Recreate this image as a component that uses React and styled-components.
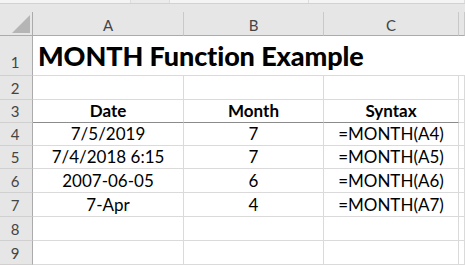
import React from "react";
import styled, { createGlobalStyle } from "styled-components";

const Global = createGlobalStyle`
  html, body { margin: 0; padding: 0; background: #ffffff; }
  body { font-family: Lato, "Noto Sans", sans-serif; overflow: hidden; }
`;

const Page = styled.div`
  width: 465px;
  height: 265px;
  overflow: hidden;
  display: flex;
  flex-direction: column;
  background: #e6e6e6;
`;

const TopEdge = styled.div`
  height: 4px;
  display: flex;
  border-bottom: 1px solid #d2d2d2;
  background: #e9e9e9;
`;

const EdgeSegment = styled.div`
  width: ${(p) => p.$w}px;
  flex: ${(p) => (p.$grow ? 1 : "none")};
  background: ${(p) => (p.$light ? "#f4f4f4" : "#ebebeb")};
  border-right: 1px solid #dcdcdc;
`;

const Spacer = styled.div`
  height: 9px;
  background: #e6e6e6;
`;

const Sheet = styled.div`
  display: grid;
  grid-template-columns: 33px 151px 140px 135px 1fr;
  grid-template-rows: 24px 40px 24px 23px 23px 23px 24px 24px 24px 24px;
  background: #ffffff;
`;

const Corner = styled.div`
  background: #e6e6e6;
  border-right: 1px solid #ababab;
  border-bottom: 1px solid #ababab;
  position: relative;
  svg { position: absolute; left: 12px; top: 3px; }
`;

const ColHead = styled.div`
  background: #e6e6e6;
  border-right: 1px solid #c9c9c9;
  border-bottom: 1px solid #ababab;
  display: flex;
  align-items: center;
  justify-content: center;
  font-family: Lato, "Noto Sans", sans-serif;
  font-size: 15px;
  color: #444444;
  padding-top: 2px;
  box-sizing: border-box;
`;

const RowHead = styled.div`
  background: #e6e6e6;
  border-right: 1px solid #ababab;
  border-bottom: 1px solid #d0d0d0;
  display: flex;
  align-items: flex-end;
  justify-content: center;
  font-family: Lato, "Noto Sans", sans-serif;
  font-size: 15px;
  color: #444444;
  padding-bottom: ${(p) => (p.$tall ? 4 : 2)}px;
  padding-right: 2px;
  box-sizing: border-box;
`;

const Cell = styled.div`
  border-right: 1px solid #dadada;
  border-bottom: 1px solid ${(p) => (p.$under ? "#8c8c8c" : "#dadada")};
  display: flex;
  align-items: flex-end;
  justify-content: center;
  padding: 0 0 1px 0;
  box-sizing: border-box;
  font-family: Lato, "Noto Sans", sans-serif;
  font-size: 17px;
  line-height: 20px;
  font-weight: ${(p) => (p.$bold ? 700 : 400)};
  color: #000000;
  white-space: nowrap;
  min-width: 0;
`;

const Title = styled(Cell)`
  grid-column: span 4;
  border-right: none;
  font-size: 27px;
  line-height: 32px;
  font-weight: 900;
  padding: 0 0 3px 5px;
  justify-content: flex-start;
  letter-spacing: -0.1px;
`;

const rows = [
  ["7/5/2019", "7", "=MONTH(A4)"],
  ["7/4/2018 6:15", "7", "=MONTH(A5)"],
  ["2007-06-05", "6", "=MONTH(A6)"],
  ["7-Apr", "4", "=MONTH(A7)"],
];

export default function App() {
  return (
    <Page>
      <Global />
      <TopEdge>
        <EdgeSegment $w={130} $light />
        <EdgeSegment $w={38} />
        <EdgeSegment $w={138} $light />
        <EdgeSegment $grow $light />
      </TopEdge>
      <Spacer />
      <Sheet>
        <Corner>
          <svg width="18" height="18" viewBox="0 0 18 18">
            <polygon points="18,0 18,18 0,18" fill="#b5b5b5" />
          </svg>
        </Corner>
        <ColHead>A</ColHead>
        <ColHead>B</ColHead>
        <ColHead>C</ColHead>
        <ColHead />

        <RowHead $tall>1</RowHead>
        <Title>MONTH Function Example</Title>

        <RowHead>2</RowHead>
        <Cell />
        <Cell />
        <Cell />
        <Cell />

        <RowHead>3</RowHead>
        <Cell $bold $under>Date</Cell>
        <Cell $bold $under>Month</Cell>
        <Cell $bold $under>Syntax</Cell>
        <Cell />

        {rows.map((r, i) => (
          <React.Fragment key={i}>
            <RowHead>{i + 4}</RowHead>
            <Cell>{r[0]}</Cell>
            <Cell>{r[1]}</Cell>
            <Cell>{r[2]}</Cell>
            <Cell />
          </React.Fragment>
        ))}

        <RowHead>8</RowHead>
        <Cell />
        <Cell />
        <Cell />
        <Cell />

        <RowHead>9</RowHead>
        <Cell />
        <Cell />
        <Cell />
        <Cell />
      </Sheet>
    </Page>
  );
}
